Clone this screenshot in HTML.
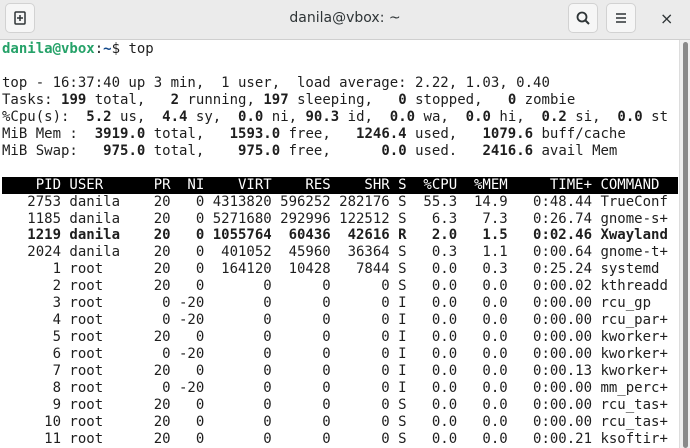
<!DOCTYPE html>
<html><head><meta charset="utf-8"><style>
body{margin:0;width:690px;height:448px;overflow:hidden;background:#fff;position:relative;font-family:"DejaVu Sans Mono","Liberation Mono",monospace}
.hb{position:absolute;left:0;top:0;width:690px;height:39px;background:#ebebeb;border-bottom:1px solid #cfcfcf}
.btn{position:absolute;top:3px;width:30px;height:30px;background:#f6f6f6;border:1px solid #d2d2d2;border-radius:5px;box-sizing:border-box}
.title{position:absolute;left:0;width:690px;top:10px;text-align:center;font:14px "DejaVu Sans","Liberation Sans",sans-serif;color:#2e3436}
pre{position:absolute;left:2px;top:41px;margin:0;font-size:14px;line-height:16.96px;color:#1e1e1e;font-family:"DejaVu Sans Mono",monospace}
b{font-weight:bold}
.g{color:#26a269;font-weight:bold}.bl{color:#12488b;font-weight:bold}
.inv{background:#000;color:#fff;display:inline-block;width:676px}
.sb{position:absolute;left:679px;top:40px;width:11px;height:408px;background:#f0f0f0;border-left:1px solid #ddd}
.th{position:absolute;left:683px;top:42px;width:5px;height:406px;background:#8a8a8a;border-radius:3px}
</style></head><body>
<div class="hb">
<div class="btn" style="left:5px"><svg width="28" height="28" viewBox="0 0 28 28"><rect x="9" y="8" width="10" height="12" rx="1" fill="none" stroke="#2e3436" stroke-width="1.5"/><path d="M14 11v6M11 14h6" stroke="#2e3436" stroke-width="1.5"/></svg></div>
<div class="title">danila@vbox: ~</div>
<div class="btn" style="left:568px"><svg width="28" height="28" viewBox="0 0 28 28"><circle cx="13" cy="13" r="4.5" fill="none" stroke="#2e3436" stroke-width="1.8"/><path d="M16.5 16.5l3.5 3.5" stroke="#2e3436" stroke-width="2"/></svg></div>
<div class="btn" style="left:606px"><svg width="28" height="28" viewBox="0 0 28 28"><path d="M9 10h10M9 14h10M9 18h10" stroke="#2e3436" stroke-width="1.6"/></svg></div>
<div style="position:absolute;left:660px;top:9px;font:16px 'DejaVu Sans',sans-serif;color:#2e3436">×</div>
</div>
<pre><span class="g">danila@vbox</span>:<span class="bl">~</span>$ top

top - 16:37:40 up 3 min,  1 user,  load average: 2.22, 1.03, 0.40
Tasks: <b>199</b> total,   <b>2</b> running, <b>197</b> sleeping,   <b>0</b> stopped,   <b>0</b> zombie
%Cpu(s):  <b>5.2</b> us,  <b>4.4</b> sy,  <b>0.0</b> ni, <b>90.3</b> id,  <b>0.0</b> wa,  <b>0.0</b> hi,  <b>0.2</b> si,  <b>0.0</b> st
MiB Mem :  <b>3919.0</b> total,   <b>1593.0</b> free,   <b>1246.4</b> used,   <b>1079.6</b> buff/cache
MiB Swap:   <b>975.0</b> total,    <b>975.0</b> free,      <b>0.0</b> used.   <b>2416.6</b> avail Mem

<span class="inv">    PID USER      PR  NI    VIRT    RES    SHR S  %CPU  %MEM     TIME+ COMMAND </span>
   2753 danila    20   0 4313820 596252 282176 S  55.3  14.9   0:48.44 TrueConf
   1185 danila    20   0 5271680 292996 122512 S   6.3   7.3   0:26.74 gnome-s+
<b>   1219 danila    20   0 1055764  60436  42616 R   2.0   1.5   0:02.46 Xwayland</b>
   2024 danila    20   0  401052  45960  36364 S   0.3   1.1   0:00.64 gnome-t+
      1 root      20   0  164120  10428   7844 S   0.0   0.3   0:25.24 systemd
      2 root      20   0       0      0      0 S   0.0   0.0   0:00.02 kthreadd
      3 root       0 -20       0      0      0 I   0.0   0.0   0:00.00 rcu_gp
      4 root       0 -20       0      0      0 I   0.0   0.0   0:00.00 rcu_par+
      5 root      20   0       0      0      0 I   0.0   0.0   0:00.00 kworker+
      6 root       0 -20       0      0      0 I   0.0   0.0   0:00.00 kworker+
      7 root      20   0       0      0      0 I   0.0   0.0   0:00.13 kworker+
      8 root       0 -20       0      0      0 I   0.0   0.0   0:00.00 mm_perc+
      9 root      20   0       0      0      0 S   0.0   0.0   0:00.00 rcu_tas+
     10 root      20   0       0      0      0 S   0.0   0.0   0:00.00 rcu_tas+
     11 root      20   0       0      0      0 S   0.0   0.0   0:00.21 ksoftir+</pre>
<div class="sb"></div><div class="th"></div>
</body></html>
